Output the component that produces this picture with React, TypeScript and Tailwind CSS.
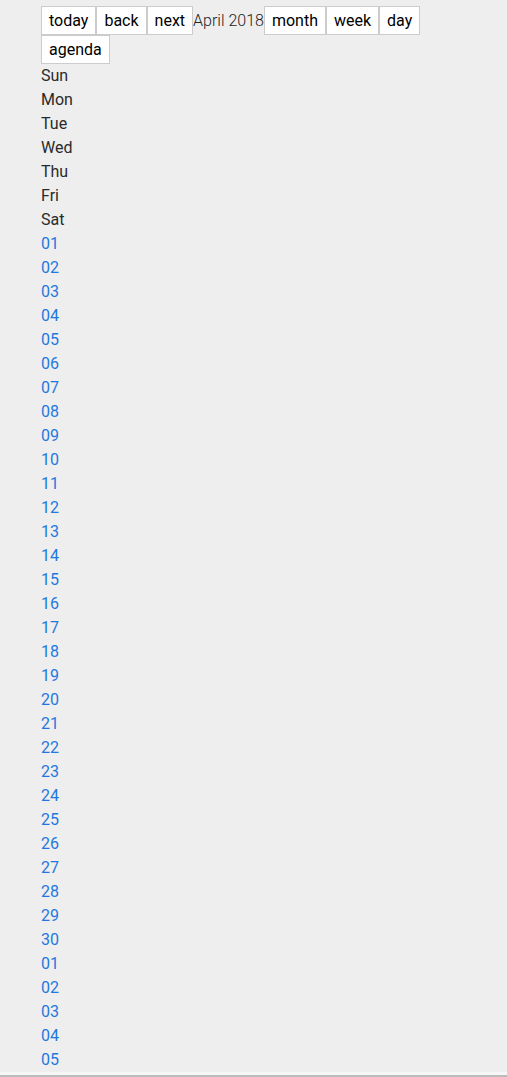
const days = ["Sun", "Mon", "Tue", "Wed", "Thu", "Fri", "Sat"];
const dates = [
  ...Array.from({ length: 30 }, (_, i) => String(i + 1).padStart(2, "0")),
  "01",
  "02",
  "03",
  "04",
  "05",
];

function Btn({ label }: { label: string }) {
  return (
    <button className="h-[29px] border border-[#cccccc] bg-white px-[7px] text-[16px] leading-[19px] text-black">
      {label}
    </button>
  );
}

export default function App() {
  return (
    <div className="min-h-screen w-full bg-[#eeeeee] font-['Roboto',sans-serif]">
      <div className="pl-[41px] pt-[6px]">
        <div className="flex w-[400px] flex-wrap items-center">
          <Btn label="today" />
          <Btn label="back" />
          <Btn label="next" />
          <span className="text-[16px] font-light text-[#222222]">April 2018</span>
          <Btn label="month" />
          <Btn label="week" />
          <Btn label="day" />
          <Btn label="agenda" />
        </div>
        <div className="flex flex-col">
          {days.map((d) => (
            <div key={d} className="h-6 text-[16px] leading-6 text-[#2a2a2a]">
              {d}
            </div>
          ))}
          {dates.map((d, i) => (
            <div key={i} className="h-6 text-[16px] leading-6 text-[#1f78e0]">
              {d}
            </div>
          ))}
        </div>
      </div>
      <div className="h-[3px] bg-[#f6f6f6]" />
      <div className="h-[2px] bg-[#bbbbbb]" />
    </div>
  );
}
